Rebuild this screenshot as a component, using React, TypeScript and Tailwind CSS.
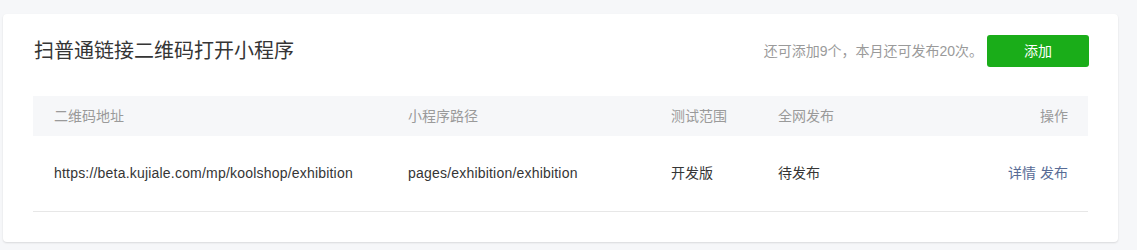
export default function App() {
  const font = {
    fontFamily:
      '"Liberation Sans", "Noto Sans CJK SC", sans-serif',
  };

  return (
    <main
      className="min-h-[250px] bg-[#f6f7f9] pt-[14px] pl-[3px] pr-[19px] pb-[7px]"
      style={font}
    >
      <div className="rounded-[4px] bg-white pl-[30px] pr-[29px] pt-[21px] pb-[30px] shadow-[0_1px_2px_rgba(0,0,0,0.12)]">
        <div className="flex h-8 items-center justify-between">
          <h1 className="pl-[1px] text-[20px] leading-8 text-[#353535]">
            扫普通链接二维码打开小程序
          </h1>
          <div className="flex items-center">
            <span className="mr-[4px] text-[14px] text-[#9a9a9a]">
              还可添加9个，本月还可发布20次。
            </span>
            <button
              type="button"
              className="h-8 w-[102px] rounded-[3px] bg-[#1aad19] text-[14px] text-white"
            >
              添加
            </button>
          </div>
        </div>

        <div className="mt-[29px] mr-[1px] text-[14px]">
          <div className="grid h-10 grid-cols-[354px_263px_107px_1fr_auto] items-center bg-[#f6f7f9] text-[#9a9a9a]">
            <div className="pl-[21px]">二维码地址</div>
            <div className="pl-[21px]">小程序路径</div>
            <div className="pl-[21px]">测试范围</div>
            <div className="pl-[21px]">全网发布</div>
            <div className="pr-5 text-right">操作</div>
          </div>

          <div className="grid h-[76px] grid-cols-[354px_263px_107px_1fr_auto] items-center border-b border-[#e7e7e7] text-[#353535]">
            <div className="pl-[21px] tracking-[0.2px]">
              https://beta.kujiale.com/mp/koolshop/exhibition
            </div>
            <div className="pl-[21px] tracking-[0.2px]">
              pages/exhibition/exhibition
            </div>
            <div className="pl-[21px]">开发版</div>
            <div className="pl-[21px]">待发布</div>
            <div className="pr-5 text-right text-[#576b95]">
              <a href="#">详情</a> <a href="#">发布</a>
            </div>
          </div>
        </div>
      </div>
    </main>
  );
}
